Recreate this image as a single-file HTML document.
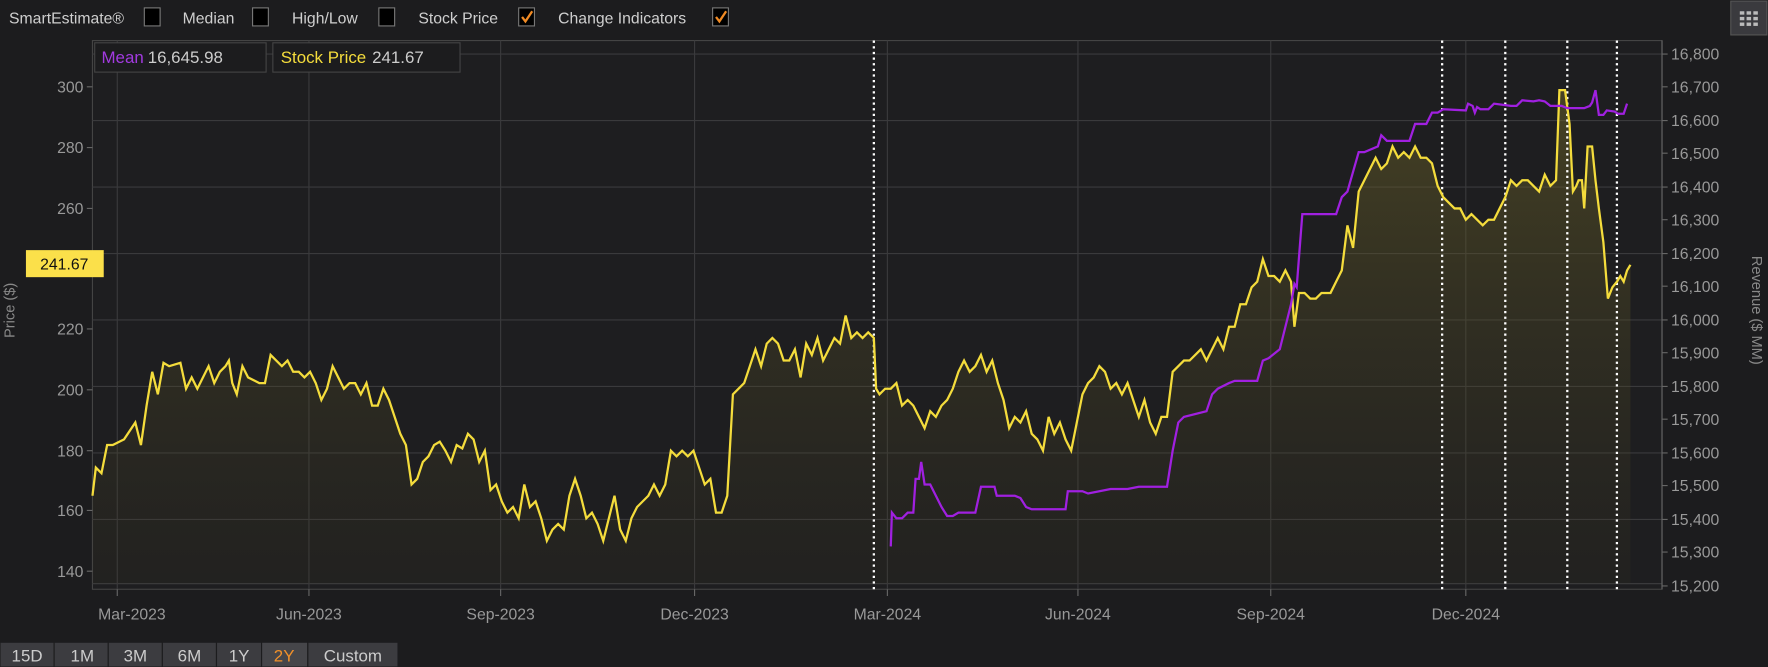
<!DOCTYPE html>
<html><head><meta charset="utf-8"><style>
html,body{margin:0;padding:0;background:#1c1c1e;overflow:hidden}
svg{display:block}
text{font-family:"Liberation Sans",sans-serif}
</style></head><body>
<svg width="1768" height="667" viewBox="0 0 1568 592" preserveAspectRatio="none">
<defs><linearGradient id="g" x1="0" y1="0" x2="0" y2="1"><stop offset="0" stop-color="#6e6528" stop-opacity="0.5"/><stop offset="1" stop-color="#3a3622" stop-opacity="0.15"/></linearGradient></defs>
<rect width="1568" height="592" fill="#1c1c1e"/>
<g font-size="14" fill="#cfcfcf">
<text x="8" y="21">SmartEstimate®</text><rect x="128" y="7" width="14" height="16" fill="#000" stroke="#777"/>
<text x="162" y="21">Median</text><rect x="224" y="7" width="14" height="16" fill="#000" stroke="#777"/>
<text x="259" y="21">High/Low</text><rect x="336" y="7" width="14" height="16" fill="#000" stroke="#777"/>
<text x="371" y="21">Stock Price</text><rect x="460" y="7" width="14" height="16" fill="#000" stroke="#777"/>
<text x="495" y="21">Change Indicators</text><rect x="632" y="7" width="14" height="16" fill="#000" stroke="#777"/>
</g>
<path d="M463 15l3 4 6-9M635 15l3 4 6-9" stroke="#f08a24" stroke-width="2" fill="none"/>
<rect x="1535" y="1" width="32" height="30" fill="#3a3a3e" stroke="#555"/>
<g fill="#bbb"><rect x="1543" y="10" width="4" height="3"/><rect x="1549" y="10" width="4" height="3"/><rect x="1555" y="10" width="4" height="3"/><rect x="1543" y="15" width="4" height="3"/><rect x="1549" y="15" width="4" height="3"/><rect x="1555" y="15" width="4" height="3"/><rect x="1543" y="20" width="4" height="3"/><rect x="1549" y="20" width="4" height="3"/><rect x="1555" y="20" width="4" height="3"/></g>
<rect x="82" y="36" width="1392" height="487" fill="#1e1e20" stroke="#444"/>
<g stroke="#3a3a3c" stroke-width="1">
<path d="M82 48H1474M82 107H1474M82 166H1474M82 225H1474M82 284H1474M82 343H1474M82 402H1474M82 461H1474M82 518H1474"/>
<path d="M104 36V523M274 36V523M444 36V523M616 36V523M787 36V523M956 36V523M1127 36V523M1300 36V523"/>
</g>
<g stroke="#666"><path d="M104 523v6M274 523v6M444 523v6M616 523v6M787 523v6M956 523v6M1127 523v6M1300 523v6"/>
<path d="M1474 36V523"/>
<path d="M1474 48h5M1474 77h5M1474 107h5M1474 136h5M1474 166h5M1474 195h5M1474 225h5M1474 254h5M1474 284h5M1474 313h5M1474 343h5M1474 372h5M1474 402h5M1474 431h5M1474 461h5M1474 490h5M1474 520h5"/>
<path d="M77 77h5M77 131h5M77 185h5M77 292h5M77 346h5M77 400h5M77 453h5M77 507h5"/></g>
<path d="M82 440L85 415L90 420L95 395L100 395L110 390L120 375L125 395L130 360L135 330L140 350L145 322L150 325L160 322L165 345L170 335L175 345L185 325L190 340L195 330L200 325L203 320L206 340L210 350L215 325L220 335L230 340L235 340L240 315L250 325L255 320L260 330L265 330L270 335L275 330L280 340L285 355L290 345L295 325L300 335L305 345L310 340L315 340L320 350L325 340L330 360L335 360L340 345L345 355L350 370L355 385L360 395L365 430L370 425L375 410L380 405L385 395L390 392L395 400L400 410L405 395L410 398L415 385L420 390L425 410L430 400L435 435L440 430L445 445L450 455L455 450L460 460L465 430L470 450L475 445L480 460L485 480L490 470L495 465L500 470L505 440L510 425L515 440L520 460L525 455L530 465L535 480L540 460L545 440L550 470L555 480L560 460L565 450L570 445L575 440L580 430L585 440L590 430L595 400L600 405L605 400L610 405L615 400L620 415L625 430L630 425L635 455L640 455L645 440L650 350L655 345L660 340L665 325L670 310L675 325L680 305L685 300L690 305L695 320L700 320L705 310L710 335L715 305L720 315L725 300L730 320L735 310L740 300L745 305L750 280L755 300L760 295L765 300L770 295L775 300L777 345L780 350L785 345L790 345L795 340L800 360L805 355L810 360L815 370L820 380L825 365L830 370L835 360L840 355L845 345L850 330L855 320L860 330L865 325L870 315L875 330L880 320L885 340L890 355L895 380L900 370L905 375L910 365L915 385L920 390L925 400L930 370L935 385L940 375L945 390L950 400L955 375L960 350L965 340L970 335L975 325L980 330L985 345L990 340L995 350L1000 340L1005 355L1010 370L1015 355L1020 375L1025 385L1030 370L1035 370L1040 330L1045 325L1050 320L1055 320L1060 315L1065 310L1070 320L1075 310L1080 300L1085 310L1090 290L1095 290L1100 270L1105 270L1110 255L1115 250L1120 230L1125 245L1130 245L1135 250L1140 240L1145 250L1148 290L1152 260L1157 260L1162 265L1167 265L1172 260L1180 260L1185 250L1190 240L1195 200L1200 220L1205 170L1210 160L1215 150L1220 140L1225 150L1230 145L1235 130L1240 140L1245 135L1250 140L1255 130L1260 140L1265 140L1270 145L1275 165L1280 175L1285 180L1290 185L1295 185L1300 195L1305 190L1310 195L1315 200L1320 195L1325 195L1330 185L1335 175L1340 160L1345 165L1350 160L1355 160L1360 165L1365 170L1370 155L1375 165L1380 160L1383 80L1388 80L1392 110L1395 170L1398 165L1400 160L1403 160L1405 185L1408 130L1412 130L1415 160L1418 185L1422 215L1426 265L1430 255L1434 250L1437 245L1440 250L1443 240L1446 235L1446 518L82 518Z" fill="url(#g)"/>
<g stroke="#fff" stroke-width="2" stroke-dasharray="2 3"><path d="M775 36V523M1279 36V523M1335 36V523M1390 36V523M1434 36V523"/></g>
<path d="M82 440L85 415L90 420L95 395L100 395L110 390L120 375L125 395L130 360L135 330L140 350L145 322L150 325L160 322L165 345L170 335L175 345L185 325L190 340L195 330L200 325L203 320L206 340L210 350L215 325L220 335L230 340L235 340L240 315L250 325L255 320L260 330L265 330L270 335L275 330L280 340L285 355L290 345L295 325L300 335L305 345L310 340L315 340L320 350L325 340L330 360L335 360L340 345L345 355L350 370L355 385L360 395L365 430L370 425L375 410L380 405L385 395L390 392L395 400L400 410L405 395L410 398L415 385L420 390L425 410L430 400L435 435L440 430L445 445L450 455L455 450L460 460L465 430L470 450L475 445L480 460L485 480L490 470L495 465L500 470L505 440L510 425L515 440L520 460L525 455L530 465L535 480L540 460L545 440L550 470L555 480L560 460L565 450L570 445L575 440L580 430L585 440L590 430L595 400L600 405L605 400L610 405L615 400L620 415L625 430L630 425L635 455L640 455L645 440L650 350L655 345L660 340L665 325L670 310L675 325L680 305L685 300L690 305L695 320L700 320L705 310L710 335L715 305L720 315L725 300L730 320L735 310L740 300L745 305L750 280L755 300L760 295L765 300L770 295L775 300L777 345L780 350L785 345L790 345L795 340L800 360L805 355L810 360L815 370L820 380L825 365L830 370L835 360L840 355L845 345L850 330L855 320L860 330L865 325L870 315L875 330L880 320L885 340L890 355L895 380L900 370L905 375L910 365L915 385L920 390L925 400L930 370L935 385L940 375L945 390L950 400L955 375L960 350L965 340L970 335L975 325L980 330L985 345L990 340L995 350L1000 340L1005 355L1010 370L1015 355L1020 375L1025 385L1030 370L1035 370L1040 330L1045 325L1050 320L1055 320L1060 315L1065 310L1070 320L1075 310L1080 300L1085 310L1090 290L1095 290L1100 270L1105 270L1110 255L1115 250L1120 230L1125 245L1130 245L1135 250L1140 240L1145 250L1148 290L1152 260L1157 260L1162 265L1167 265L1172 260L1180 260L1185 250L1190 240L1195 200L1200 220L1205 170L1210 160L1215 150L1220 140L1225 150L1230 145L1235 130L1240 140L1245 135L1250 140L1255 130L1260 140L1265 140L1270 145L1275 165L1280 175L1285 180L1290 185L1295 185L1300 195L1305 190L1310 195L1315 200L1320 195L1325 195L1330 185L1335 175L1340 160L1345 165L1350 160L1355 160L1360 165L1365 170L1370 155L1375 165L1380 160L1383 80L1388 80L1392 110L1395 170L1398 165L1400 160L1403 160L1405 185L1408 130L1412 130L1415 160L1418 185L1422 215L1426 265L1430 255L1434 250L1437 245L1440 250L1443 240L1446 235" fill="none" stroke="#f4dc3c" stroke-width="2"/>
<path d="M790 485L791 455L795 460L800 460L805 455L810 455L812 425L815 425L817 410L820 430L825 430L835 450L840 458L845 458L850 455L865 455L870 432L882 432L884 440L900 440L905 442L910 450L915 452L945 452L947 436L960 436L965 438L985 434L1000 434L1010 432L1035 432L1040 400L1045 375L1050 370L1070 365L1075 350L1080 345L1090 340L1095 338L1115 338L1120 320L1125 318L1135 310L1140 290L1145 270L1148 252L1150 255L1155 190L1160 190L1185 190L1190 175L1195 170L1205 135L1210 135L1222 130L1225 120L1230 125L1250 125L1255 110L1265 110L1270 100L1275 100L1280 97L1300 98L1302 92L1306 94L1308 100L1310 95L1313 97L1320 97L1325 92L1340 94L1345 94L1350 89L1360 90L1365 89L1370 90L1375 94L1385 94L1390 96L1405 96L1410 94L1412 91L1415 80L1418 102L1422 102L1425 98L1432 99L1435 101L1440 101L1443 92" fill="none" stroke="#a020e0" stroke-width="2"/>
<rect x="84" y="38" width="152" height="26" fill="#1c1c1e" stroke="#444"/>
<text x="90" y="56" font-size="15" fill="#a23ae0">Mean</text><text x="131" y="56" font-size="15" fill="#ccc">16,645.98</text>
<rect x="242" y="38" width="166" height="26" fill="#1c1c1e" stroke="#444"/>
<text x="249" y="56" font-size="15" fill="#f4dc3c">Stock Price</text><text x="330" y="56" font-size="15" fill="#ccc">241.67</text>
<g font-size="14" fill="#999" text-anchor="end">
<text x="74" y="82">300</text><text x="74" y="136">280</text><text x="74" y="190">260</text><text x="74" y="297">220</text><text x="74" y="351">200</text><text x="74" y="405">180</text><text x="74" y="458">160</text><text x="74" y="512">140</text></g>
<rect x="23" y="222" width="69" height="24" fill="#fbe04a"/>
<text x="57" y="239" font-size="14" fill="#111" text-anchor="middle">241.67</text>
<text transform="translate(13,300) rotate(-90)" font-size="13" fill="#888">Price ($)</text>
<g font-size="14" fill="#999">
<text x="1482" y="53">16,800</text><text x="1482" y="82">16,700</text><text x="1482" y="112">16,600</text><text x="1482" y="141">16,500</text><text x="1482" y="171">16,400</text><text x="1482" y="200">16,300</text><text x="1482" y="230">16,200</text><text x="1482" y="259">16,100</text><text x="1482" y="289">16,000</text><text x="1482" y="318">15,900</text><text x="1482" y="348">15,800</text><text x="1482" y="377">15,700</text><text x="1482" y="407">15,600</text><text x="1482" y="436">15,500</text><text x="1482" y="466">15,400</text><text x="1482" y="495">15,300</text><text x="1482" y="525">15,200</text></g>
<text transform="translate(1554,227) rotate(90)" font-size="13" fill="#888">Revenue ($ MM)</text>
<g font-size="14" fill="#999" text-anchor="middle">
<text x="117" y="550">Mar-2023</text><text x="274" y="550">Jun-2023</text><text x="444" y="550">Sep-2023</text><text x="616" y="550">Dec-2023</text><text x="787" y="550">Mar-2024</text><text x="956" y="550">Jun-2024</text><text x="1127" y="550">Sep-2024</text><text x="1300" y="550">Dec-2024</text></g>
<g fill="#3c3c40" stroke="#1c1c1e"><rect x="0" y="570" width="48" height="22"/><rect x="48" y="570" width="48" height="22"/><rect x="96" y="570" width="48" height="22"/><rect x="144" y="570" width="48" height="22"/><rect x="192" y="570" width="40" height="22"/><rect x="232" y="570" width="41" height="22" fill="#46464a"/><rect x="273" y="570" width="80" height="22"/></g>
<g font-size="15" fill="#ccc" text-anchor="middle"><text x="24" y="587">15D</text><text x="73" y="587">1M</text><text x="120" y="587">3M</text><text x="168" y="587">6M</text><text x="212" y="587">1Y</text><text x="252" y="587" fill="#f0902a">2Y</text><text x="313" y="587">Custom</text></g>
</svg>
</body></html>
